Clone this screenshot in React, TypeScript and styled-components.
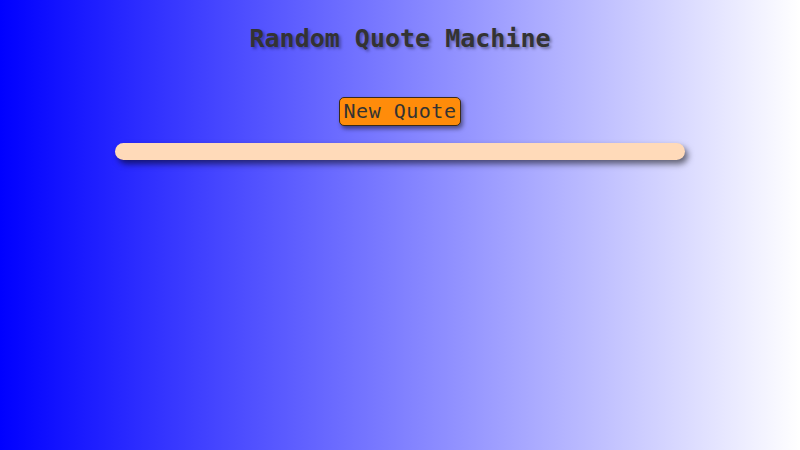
import React from 'react';
import styled, { createGlobalStyle } from 'styled-components';

const GlobalStyle = createGlobalStyle`
  html, body {
    margin: 0;
    height: 100%;
  }
  body {
    background: linear-gradient(to right, #0000ff, #ffffff);
    font-family: 'DejaVu Sans Mono', monospace;
    color: #333;
  }
`;

const Page = styled.main`
  display: flex;
  flex-direction: column;
  align-items: center;
  min-height: 450px;
  padding-top: 22px;
  box-sizing: border-box;
`;

const Title = styled.h1`
  margin: 0;
  font-size: 25px;
  font-weight: bold;
  line-height: 34px;
  color: #333;
  text-shadow: 2px 2px 3px rgba(0, 0, 0, 0.35);
`;

const NewQuoteButton = styled.button`
  margin-top: 41px;
  padding: 1px 4px;
  font-family: 'DejaVu Sans Mono', monospace;
  font-size: 20px;
  line-height: 25px;
  color: #333;
  background: #ff8c0a;
  border: 1px solid #3a2a1a;
  border-radius: 5px;
  box-shadow: 2px 3px 4px rgba(0, 0, 0, 0.45);
  letter-spacing: 0.5px;
  cursor: pointer;
`;

const QuoteBox = styled.section`
  margin-top: 17px;
  width: 570px;
  height: 17px;
  background: #ffdab9;
  border-radius: 9px;
  box-shadow: 3px 4px 6px rgba(0, 0, 0, 0.55);
`;

export default function App() {
  return (
    <>
      <GlobalStyle />
      <Page>
        <Title>Random Quote Machine</Title>
        <NewQuoteButton>New Quote</NewQuoteButton>
        <QuoteBox />
      </Page>
    </>
  );
}
